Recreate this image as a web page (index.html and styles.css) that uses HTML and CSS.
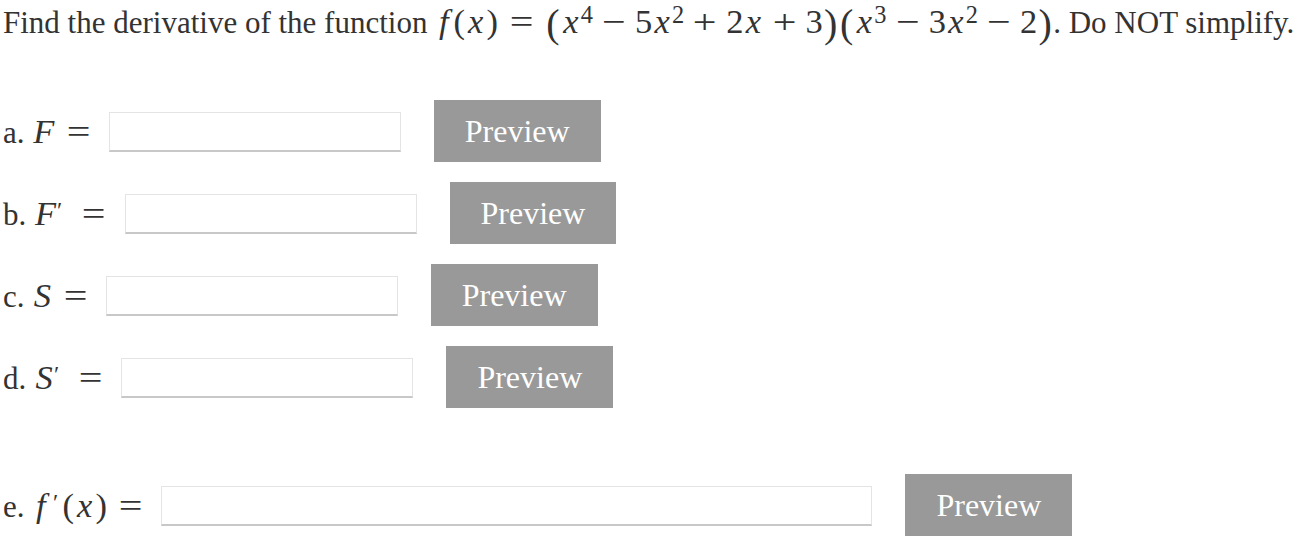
FILE: index.html
```html
<!DOCTYPE html>
<html>
<head>
<meta charset="utf-8">
<link rel="stylesheet" href="styles.css">
</head>
<body>
<div class="problem">
  <p class="question">Find the derivative of the function <span class="m"><span class="mi w-f">f</span><span class="mo">(</span><span class="mi w-x">x</span><span class="mo">)</span><span class="rel"><span class="g">=</span></span><span class="big">(</span><span class="mi w-x">x</span><sup class="sup">4</sup><span class="bin"><span class="g">−</span></span>5<span class="mi w-x">x</span><sup class="sup">2</sup><span class="bin"><span class="g">+</span></span>2<span class="mi w-x">x</span><span class="bin"><span class="g">+</span></span>3<span class="big">)</span><span class="big">(</span><span class="mi w-x">x</span><sup class="sup">3</sup><span class="bin"><span class="g">−</span></span>3<span class="mi w-x">x</span><sup class="sup">2</sup><span class="bin"><span class="g">−</span></span>2<span class="big">)</span></span>. Do NOT simplify.</p>

  <div class="row">
    <span class="label">a. <span class="m"><span class="mi w-F">F</span><span class="rel"><span class="g">=</span></span></span></span>
    <input class="answer" type="text">
    <button class="preview">Preview</button>
  </div>
  <div class="row">
    <span class="label">b. <span class="m"><span class="mi w-F">F</span><span class="prime">′</span><span class="rel"><span class="g">=</span></span></span></span>
    <input class="answer" type="text">
    <button class="preview">Preview</button>
  </div>
  <div class="row">
    <span class="label">c. <span class="m"><span class="mi w-S">S</span><span class="rel"><span class="g">=</span></span></span></span>
    <input class="answer" type="text">
    <button class="preview">Preview</button>
  </div>
  <div class="row">
    <span class="label">d. <span class="m"><span class="mi w-S">S</span><span class="prime">′</span><span class="rel"><span class="g">=</span></span></span></span>
    <input class="answer" type="text">
    <button class="preview">Preview</button>
  </div>
  <div class="row row-last">
    <span class="label">e. <span class="m"><span class="mi w-f">f</span><span class="prime prime-f">′</span><span class="mo">(</span><span class="mi w-x">x</span><span class="mo">)</span><span class="rel"><span class="g">=</span></span></span></span>
    <input class="answer answer-wide" type="text">
    <button class="preview">Preview</button>
  </div>
</div>
</body>
</html>
```

FILE: styles.css
```css
html, body {
  margin: 0;
  padding: 0;
  background: #ffffff;
}

body {
  font-family: "Liberation Serif", "Times New Roman", serif;
  font-size: 31px;
  color: #333333;
}

.problem {
  padding-left: 3px;
}

.question {
  margin: 0;
  height: 43px;
  line-height: 43px;
  white-space: nowrap;
}

/* math typesetting */
.m {
  font-family: "Liberation Serif", "Times New Roman", serif;
  font-size: 34.5px;
  white-space: nowrap;
}

.mi {
  display: inline-block;
  font-style: italic;
  text-align: center;
}

.w-f { width: 0.5em; }
.w-x { width: 0.572em; }
.w-F { width: 0.67em; }
.w-S { width: 0.58em; }

.mo {
  display: inline-block;
  width: 0.389em;
  text-align: center;
}

.sup {
  font-size: 0.707em;
  line-height: normal;
  vertical-align: 0.42em;
}

.rel,
.bin {
  display: inline-block;
  width: 0.778em;
  text-align: center;
}

.rel {
  margin: 0 0.278em;
}

.bin {
  margin: 0 0.222em;
}

.g {
  display: inline-block;
  transform: scaleX(1.22);
}

.big {
  display: inline-block;
  width: 16px;
  font-size: 40px;
  line-height: normal;
  text-align: center;
  vertical-align: -4px;
}

.prime {
  display: inline-block;
  width: 14px;
  font-size: 24px;
  line-height: normal;
  vertical-align: 7px;
  text-align: left;
}

.prime-f {
  width: 12px;
  text-align: center;
}

/* answer rows */
.row {
  display: flex;
  align-items: center;
  height: 62px;
  margin-top: 20px;
}

.question + .row {
  margin-top: 57px;
}

.row-last {
  margin-top: 66px;
}

.label {
  white-space: pre;
}

.label .rel {
  margin-right: 0;
}

.answer {
  box-sizing: border-box;
  width: 292px;
  height: 40px;
  margin: 2px 33px 0 17px;
  padding: 0 6px;
  border: 1px solid #e4e4e4;
  border-bottom: 2px solid #c8c8c8;
  background: #ffffff;
  font: inherit;
  outline: none;
}

.answer-wide {
  width: 711px;
}

.preview {
  height: 62px;
  padding: 0 31px;
  border: none;
  background: #999999;
  color: #ffffff;
  font-family: "Liberation Serif", "Times New Roman", serif;
  font-size: 32px;
  cursor: pointer;
}
```
